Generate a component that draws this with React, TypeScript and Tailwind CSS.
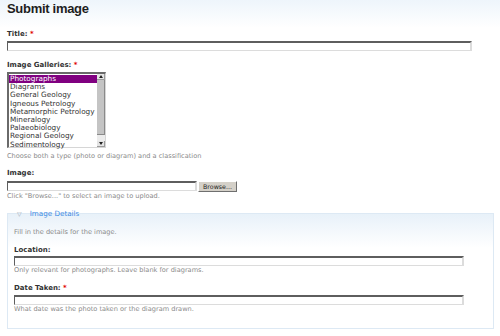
import React from "react";

const galleries = [
  "Photographs",
  "Diagrams",
  "General Geology",
  "Igneous Petrology",
  "Metamorphic Petrology",
  "Mineralogy",
  "Palaeobiology",
  "Regional Geology",
  "Sedimentology",
];

function Label({ text, required }: { text: string; required?: boolean }) {
  return (
    <div className="text-[7px] leading-[9px] font-bold text-[#333]">
      {text}
      {required && <span className="text-[#e00000]"> *</span>}
    </div>
  );
}

function Help({ text }: { text: string }) {
  return <div className="text-[6.6px] leading-[8px] text-[#8a8a8a]">{text}</div>;
}

// classic inset text field
function TextInput({ className }: { className: string }) {
  return (
    <div
      className={`h-[10px] bg-white border-t-2 border-l border-b border-r-2 border-t-[#5e5e5e] border-l-[#5e5e5e] border-b-[#dcdcdc] border-r-[#dcdcdc] ${className}`}
    />
  );
}

function Arrow({ up }: { up?: boolean }) {
  return (
    <div className="h-[6px] flex items-center justify-center bg-[#e4e4e4] border-r border-b border-[#9a9a9a]">
      <svg width="4" height="3" viewBox="0 0 4 3">
        <path d={up ? "M0 3 L2 0 L4 3 Z" : "M0 0 L2 3 L4 0 Z"} fill="#222" />
      </svg>
    </div>
  );
}

export default function App() {
  return (
    <div
      className="w-[500px] h-[336px] overflow-hidden pl-[7px] bg-[linear-gradient(#eef5fb,#ffffff_28px)]"
      style={{ fontFamily: '"DejaVu Sans", Verdana, sans-serif' }}
    >
      <h1
        className="mt-[1px] text-[13px] leading-[16px] font-bold tracking-[-0.3px] text-[#1e1e1e]"
        style={{ fontFamily: '"Liberation Sans", Arial, sans-serif' }}
      >
        Submit image
      </h1>

      {/* Title */}
      <div className="mt-[13px]">
        <Label text="Title:" required />
      </div>
      <TextInput className="mt-[2px] w-[465px]" />

      {/* Galleries */}
      <div className="mt-[10px]">
        <Label text="Image Galleries:" required />
      </div>
      <div className="mt-[2px] w-[99px] h-[76px] flex bg-white border-t-2 border-l-2 border-t-[#6a6a6a] border-l-[#6a6a6a] border-b border-r border-b-[#d6d6d6] border-r-[#d6d6d6]">
        <div className="flex-1 pt-px">
          {galleries.map((g, i) => (
            <div
              key={g}
              className={`h-[8.2px] leading-[8.2px] pl-[1px] text-[7.3px] whitespace-nowrap ${
                i === 0 ? "bg-[#800080] text-white" : "text-[#333]"
              }`}
            >
              {g}
            </div>
          ))}
        </div>
        <div className="w-[8px] flex flex-col bg-[#ececec]">
          <Arrow up />
          <div className="h-[55px] bg-[#c4c4c4] border-r border-b border-[#8a8a8a]" />
          <div className="flex-1" />
          <Arrow />
        </div>
      </div>
      <div className="mt-[4px]">
        <Help text="Choose both a type (photo or diagram) and a classification" />
      </div>

      {/* Image upload */}
      <div className="mt-[9px]">
        <Label text="Image:" />
      </div>
      <div className="mt-[3px] h-[10px] flex items-start">
        <TextInput className="w-[190px]" />
        <button className="ml-px h-[11px] w-[39px] bg-[#d4d0c8] border-t border-l border-white border-r border-b border-r-[#6f6f6f] border-b-[#6f6f6f] text-[6.3px] leading-[9px] text-[#222]">
          Browse...
        </button>
      </div>
      <div className="mt-[1px]">
        <Help text={'Click "Browse..." to select an image to upload.'} />
      </div>

      {/* Image details fieldset */}
      <div className="mt-[13px] w-[487px] h-[116px] pl-[6px] border border-[#dde9f4] bg-[linear-gradient(#e8f1f9,#ffffff_34px)]">
        <div className="mt-[-5px] pl-[3px] flex items-center text-[7.2px] leading-[9px]">
          <span className="text-[#9aa6b2] text-[6px]">▽</span>
          <span className="ml-[8px] text-[#3d8ce4]">Image Details</span>
        </div>
        <div className="mt-[10px]">
          <Help text="Fill in the details for the image." />
        </div>
        <div className="mt-[10px]">
          <Label text="Location:" />
        </div>
        <TextInput className="mt-[1px] w-[450px]" />
        <Help text="Only relevant for photographs. Leave blank for diagrams." />
        <div className="mt-[10px]">
          <Label text="Date Taken:" required />
        </div>
        <TextInput className="mt-[2px] w-[450px]" />
        <Help text="What date was the photo taken or the diagram drawn." />
      </div>
    </div>
  );
}
